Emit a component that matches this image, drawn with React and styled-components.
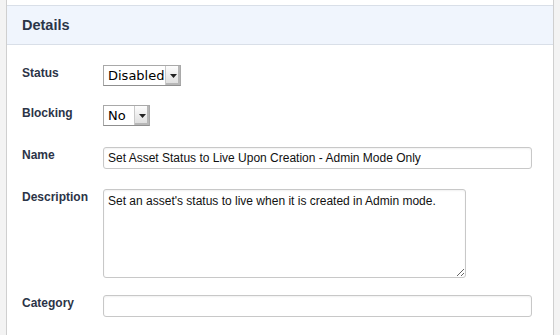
import React from 'react'
import styled, { createGlobalStyle } from 'styled-components'

const GlobalStyle = createGlobalStyle`
    html, body {
        margin: 0;
        padding: 0;
        background: #f3f3f3;
    }
    body {
        font-family: "Liberation Sans", Arial, sans-serif;
        color: #222;
    }
`

const Page = styled.div`
    display: flex;
    height: 335px;
    padding: 0 6px;
    overflow: hidden;
`

const Panel = styled.div`
    flex: 1;
    background: #fff;
    border-left: 1px solid #cfcfcf;
    border-right: 1px solid #cfcfcf;
    padding-top: 5px;
`

const Header = styled.div`
    height: 38px;
    display: flex;
    align-items: center;
    padding-left: 15px;
    background: #f0f5fd;
    border-top: 1px solid #d9dfe8;
    border-bottom: 1px solid #d9dfe8;

    h2 {
        margin: 0;
        font-size: 14.5px;
        font-weight: bold;
        color: #2b3548;
    }
`

const Form = styled.div`
    padding: 20px 21px 0 15px;
    display: flex;
    flex-direction: column;
`

const Row = styled.div`
    display: flex;
    align-items: flex-start;
    margin-bottom: ${p => p.$gap}px;
`

const Label = styled.div`
    width: 81px;
    flex-shrink: 0;
    padding-top: 1px;
    font-size: 12px;
    line-height: 14px;
    font-weight: bold;
    color: #2c3447;
`

const SelectBox = styled.div`
    display: flex;
    width: ${p => p.$width}px;
    height: 21px;
    box-sizing: border-box;
    border: 1px solid #a9a9a9;
    border-bottom-color: #8f8f8f;
    background: #fff;
    font-family: "DejaVu Sans", sans-serif;
    font-size: 13px;
    color: #000;
`

const SelectValue = styled.span`
    flex: 1;
    padding-left: 4px;
    line-height: 19px;
`

const ArrowButton = styled.span`
    width: 14px;
    display: flex;
    align-items: center;
    justify-content: center;
    background: linear-gradient(#fdfdfd, #dcdcdc);
    border-left: 1px solid #c9c9c9;
    box-shadow: inset -2px -2px 0 #b7b7b7;
`

const TextInput = styled.div`
    flex: 1;
    height: 22px;
    box-sizing: border-box;
    border: 1px solid #c8c8c8;
    border-radius: 3px;
    box-shadow: inset 0 1px 2px rgba(0, 0, 0, 0.06);
    padding: 0 4px;
    font-family: "Liberation Sans", Arial, sans-serif;
    font-size: 12px;
    line-height: 20px;
    color: #111;
    white-space: nowrap;
`

const TextArea = styled.textarea`
    width: 363px;
    height: 89px;
    box-sizing: border-box;
    margin: 0;
    border: 1px solid #c8c8c8;
    border-radius: 3px;
    box-shadow: inset 0 1px 2px rgba(0, 0, 0, 0.06);
    padding: 4px 3px 3px 4px;
    font-family: "Liberation Sans", Arial, sans-serif;
    font-size: 12px;
    line-height: 15px;
    color: #111;
    resize: both;
    outline: none;
`

const Select = ({ value, width }) => (
    <SelectBox $width={width}>
        <SelectValue>{value}</SelectValue>
        <ArrowButton>
            <svg width="7" height="4" viewBox="0 0 7 4">
                <path d="M0 0h7L3.5 4z" fill="#222" />
            </svg>
        </ArrowButton>
    </SelectBox>
)

const App = () => {
    return (
        <>
            <GlobalStyle />
            <Page>
                <Panel>
                    <Header>
                        <h2>Details</h2>
                    </Header>
                    <Form>
                        <Row $gap={19}>
                            <Label>Status</Label>
                            <Select value="Disabled" width={78} />
                        </Row>
                        <Row $gap={21}>
                            <Label>Blocking</Label>
                            <Select value="No" width={47} />
                        </Row>
                        <Row $gap={20}>
                            <Label>Name</Label>
                            <TextInput>Set Asset Status to Live Upon Creation - Admin Mode Only</TextInput>
                        </Row>
                        <Row $gap={17}>
                            <Label>Description</Label>
                            <TextArea defaultValue="Set an asset's status to live when it is created in Admin mode." />
                        </Row>
                        <Row $gap={0}>
                            <Label>Category</Label>
                            <TextInput />
                        </Row>
                    </Form>
                </Panel>
            </Page>
        </>
    )
}

export default App
